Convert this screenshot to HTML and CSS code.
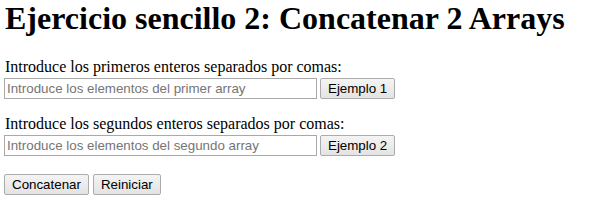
FILE: index.html
```html
<!DOCTYPE html>
<html lang="es">
<head>
<meta charset="utf-8">
<title>Concatenar 2 Arrays</title>
<link rel="stylesheet" href="styles.css">
</head>
<body>
<h1 class="title">Ejercicio sencillo 2: Concatenar 2 Arrays</h1>
<div class="field field-first">
  <label class="label" for="a1">Introduce los primeros enteros separados por comas:</label>
  <div class="row">
    <input id="a1" class="text-input" type="text" placeholder="Introduce los elementos del primer array">
    <button class="btn" type="button">Ejemplo 1</button>
  </div>
</div>
<div class="field">
  <label class="label" for="a2">Introduce los segundos enteros separados por comas:</label>
  <div class="row">
    <input id="a2" class="text-input" type="text" placeholder="Introduce los elementos del segundo array">
    <button class="btn" type="button">Ejemplo 2</button>
  </div>
</div>
<div class="actions">
  <button class="btn" type="button">Concatenar</button>
  <button class="btn" type="button">Reiniciar</button>
</div>
</body>
</html>
```

FILE: styles.css
```css
html, body {
  margin: 0;
  padding: 0;
  background: #ffffff;
}
body {
  padding: 0 4px;
  font-family: "Liberation Serif", "Times New Roman", serif;
  font-size: 16px;
  color: #000;
}
.title {
  margin: 0 0 0 1px;
  font-size: 32px;
  font-weight: bold;
  line-height: 37px;
}
.field {
  display: flex;
  flex-direction: column;
  margin-top: 16px;
}
.field-first {
  margin-top: 21px;
}
.label {
  display: block;
  margin-left: 1px;
  line-height: 18px;
}
.row {
  display: flex;
  gap: 3px;
  margin-top: 2px;
}
.text-input {
  box-sizing: border-box;
  width: 313px;
  height: 21px;
  margin: 0;
  padding: 1px 2px;
  border: 1px solid #a9a9a9;
  font-family: "Liberation Sans", Arial, sans-serif;
  font-size: 13.33px;
  color: #000;
  background: #fff;
  outline: none;
}
.text-input::placeholder {
  color: #757575;
}
.btn {
  box-sizing: border-box;
  height: 21px;
  margin: 0;
  padding: 0 7px;
  border: 1px solid #acacac;
  border-radius: 2px;
  background: linear-gradient(#f4f4f4, #e3e3e3);
  font-family: "Liberation Sans", Arial, sans-serif;
  font-size: 13.33px;
  color: #000;
}
.actions {
  display: flex;
  gap: 4px;
  margin-top: 18px;
}
```
